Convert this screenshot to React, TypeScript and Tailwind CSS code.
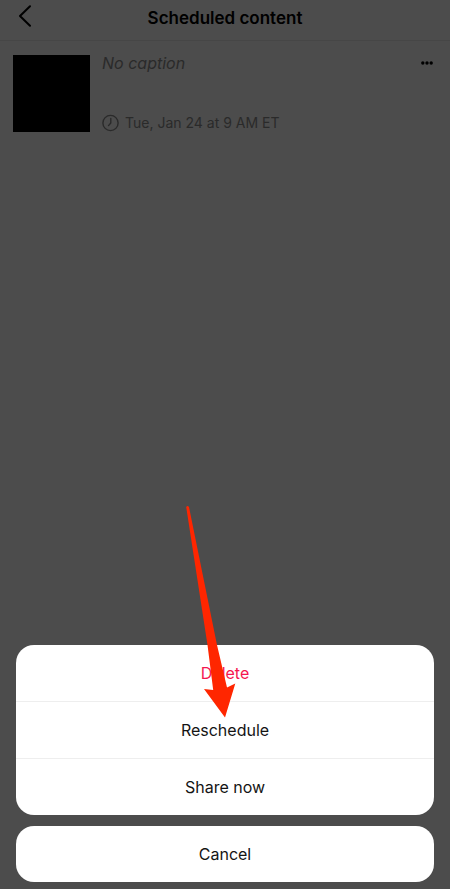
const actions = [
  { label: 'Delete', color: 'text-[#f5164f]' },
  { label: 'Reschedule', color: 'text-[#141414]' },
  { label: 'Share now', color: 'text-[#141414]' },
];

function BackIcon() {
  return (
    <svg width="14" height="22" viewBox="0 0 14 22" fill="none" stroke="currentColor" strokeWidth="2" strokeLinecap="round" strokeLinejoin="round" aria-hidden="true">
      <path d="M12 1.2 2 11l10 9.8" />
    </svg>
  );
}

function ClockIcon() {
  return (
    <svg width="17" height="18" viewBox="0 0 17 18" fill="none" stroke="currentColor" strokeWidth="1.4" strokeLinecap="round" strokeLinejoin="round" aria-hidden="true">
      <circle cx="8.5" cy="9" r="7.6" />
      <path d="M8.8 4.5V9l-2.3 2.6" />
    </svg>
  );
}

function MoreIcon() {
  return (
    <svg width="12" height="4" viewBox="0 0 12 4" fill="currentColor" aria-hidden="true">
      <circle cx="1.8" cy="2" r="1.7" />
      <circle cx="6" cy="2" r="1.7" />
      <circle cx="10.2" cy="2" r="1.7" />
    </svg>
  );
}

function Arrow() {
  return (
    <svg className="pointer-events-none absolute bottom-[171px] left-1/2 -ml-10" width="52" height="214" viewBox="0 0 52 214" fill="#ff2600" aria-hidden="true">
      <path d="M1.2 3Q2.5 1 4 3L32 141 42 183.5 50.3 179.5 40 213.5 19 185 28.2 186 22.5 141Z" />
    </svg>
  );
}

export default function App() {
  return (
    <div className="flex min-h-screen flex-col bg-[#4c4c4c] font-['Inter',sans-serif]">
      <header className="grid h-[41px] grid-cols-[1fr_auto_1fr] items-center border-b border-[#464646] px-[18px] pb-2 text-black">
        <button type="button" aria-label="Back" className="justify-self-start">
          <BackIcon />
        </button>
        <h1 className="pt-1 text-[17px] leading-6 font-semibold">Scheduled content</h1>
      </header>

      <main className="flex grow px-[13px] pt-[14px]">
        <div className="size-[77px] shrink-0 bg-black" />
        <div className="flex h-[77px] grow flex-col justify-between pl-3 text-[#2a2a2a]">
          <div className="flex items-center justify-between pr-1">
            <p className="text-base leading-4 italic">No caption</p>
            <button type="button" aria-label="More options" className="text-black">
              <MoreIcon />
            </button>
          </div>
          <p className="flex items-center gap-1.5 text-sm leading-4">
            <ClockIcon />
            <span>Tue, Jan 24 at 9 AM ET</span>
          </p>
        </div>
      </main>

      <div role="dialog" aria-label="Post actions" className="relative flex flex-col gap-[11px] px-4 pb-[7px] text-base">
        <ul className="divide-y divide-[#eeeeee] overflow-hidden rounded-[18px] bg-white">
          {actions.map(({ label, color }) => (
            <li key={label}>
              <button type="button" className={`block h-14 w-full ${color}`}>
                {label}
              </button>
            </li>
          ))}
        </ul>
        <button type="button" className="h-14 rounded-[18px] bg-white text-[#141414]">
          Cancel
        </button>
        <Arrow />
      </div>
    </div>
  );
}
